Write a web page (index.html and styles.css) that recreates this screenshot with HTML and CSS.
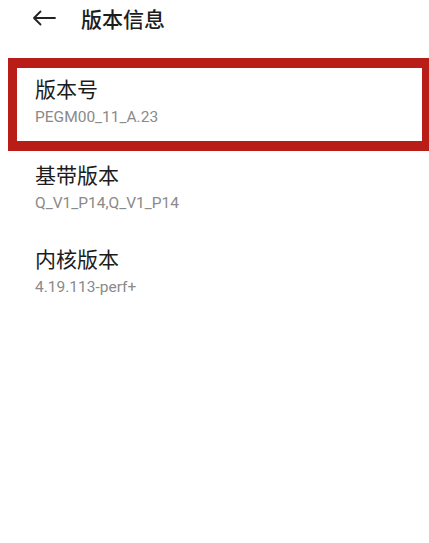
FILE: index.html
```html
<!DOCTYPE html>
<html lang="zh-CN">
<head>
<meta charset="utf-8">
<title>版本信息</title>
<link rel="stylesheet" href="styles.css">
</head>
<body>
<div class="page">
  <header class="header">
    <svg class="back" width="24" height="16" viewBox="0 0 24 16" aria-hidden="true">
      <path d="M2 8 H23 M8.5 1.5 L2 8 L8.5 14.5" fill="none" stroke="#222" stroke-width="1.8" stroke-linecap="round" stroke-linejoin="round"/>
    </svg>
    <h1 class="title">版本信息</h1>
  </header>
  <ul class="list">
    <li class="item item-highlight">
      <div class="item-title">版本号</div>
      <div class="item-sub">PEGM00_11_A.23</div>
    </li>
    <li class="item">
      <div class="item-title">基带版本</div>
      <div class="item-sub">Q_V1_P14,Q_V1_P14</div>
    </li>
    <li class="item">
      <div class="item-title">内核版本</div>
      <div class="item-sub">4.19.113-perf+</div>
    </li>
  </ul>
</div>
</body>
</html>
```

FILE: styles.css
```css
html, body {
  margin: 0;
  padding: 0;
  background: #ffffff;
}

.page {
  width: 429px;
  height: 543px;
  overflow: hidden;
  font-family: "Noto Sans CJK SC", "Noto Sans", sans-serif;
  color: #1c1c1c;
}

.header {
  height: 36px;
  display: flex;
  align-items: center;
  padding-left: 32px;
  gap: 25px;
}

.back {
  display: block;
  flex: none;
}

.title {
  margin: 0;
  font-size: 21px;
  font-weight: 500;
  line-height: 28px;
  color: #1c1c1c;
}

.list {
  list-style: none;
  margin: 22px 0 0 0;
  padding: 0;
}

.item {
  display: flex;
  flex-direction: column;
  gap: 5px;
  padding: 9px 0 22px 35px;
}

.item-highlight {
  margin-left: 8px;
  border: 10px solid #b81d18;
  border-left-width: 9px;
  border-right-width: 7px;
  padding: 6px 0 14px 18px;
}

.item-title {
  font-size: 21px;
  line-height: 28px;
  color: #1c1c1c;
}

.item-sub {
  font-family: Roboto, "Noto Sans", sans-serif;
  font-size: 15.5px;
  line-height: 20px;
  color: #8a8a8a;
}
```
